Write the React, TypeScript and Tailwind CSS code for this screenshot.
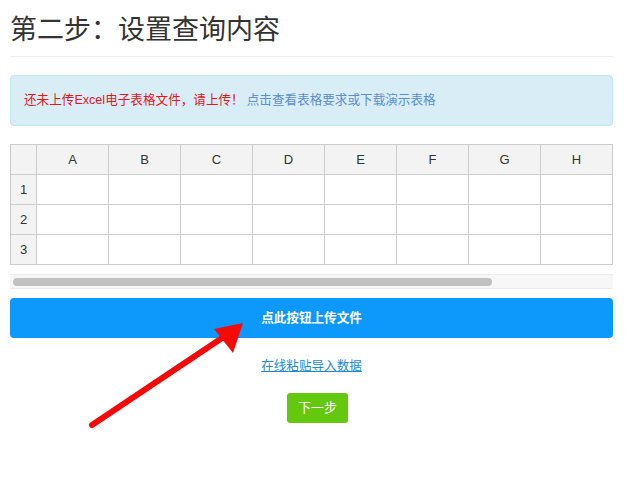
const cols = ['A', 'B', 'C', 'D', 'E', 'F', 'G', 'H'];
const rows = [1, 2, 3];

export default function App() {
  return (
    <div
      className="relative w-[627px] h-[478px] bg-white pl-[10px] pr-[14px] text-[#333]"
      style={{ fontFamily: '"Liberation Sans", "Noto Sans CJK SC", sans-serif' }}
    >
      {/* page heading */}
      <h1 className="pt-[13px] pb-[9px] text-[27px] leading-[34px] text-[#333] border-b border-[#eee]">
        第二步：设置查询内容
      </h1>

      {/* notice */}
      <div className="mt-[18px] h-[51px] flex items-center px-[13px] rounded-[4px] bg-[#d9edf7] border border-[#bce8f1] text-[12.6px]">
        <span className="text-[#e4161b]">还未上传Excel电子表格文件，请上传！</span>
        <a className="ml-[3px] text-[#5a8ed0]">点击查看表格要求或下载演示表格</a>
      </div>

      {/* sheet preview */}
      <div className="mt-[18px] w-[603px] overflow-hidden">
        <table className="border-collapse text-[13px] text-[#333] table-fixed">
          <thead>
            <tr className="h-[30px] bg-[#f3f3f3]">
              <th className="w-[27px] border border-[#ccc] font-normal"></th>
              {cols.map((c) => (
                <th key={c} className="w-[72px] min-w-[72px] border border-[#ccc] font-normal">
                  {c}
                </th>
              ))}
            </tr>
          </thead>
          <tbody>
            {rows.map((r) => (
              <tr key={r} className="h-[30px]">
                <td className="w-[27px] border border-[#ccc] bg-[#f3f3f3] text-center">{r}</td>
                {cols.map((c) => (
                  <td key={c} className="w-[72px] min-w-[72px] border border-[#ccc]"></td>
                ))}
              </tr>
            ))}
          </tbody>
        </table>
      </div>

      {/* horizontal scrollbar */}
      <div className="mt-[9px] h-[15px] bg-[#f7f7f7] border-y border-[#ececec] flex items-center px-[3px]">
        <div className="w-[479px] h-[8px] rounded-full bg-[#c1c1c1]"></div>
      </div>

      <button className="mt-[9px] w-full h-[40px] rounded-[4px] bg-[#0d99fb] text-white text-[12.6px] font-semibold">
        点此按钮上传文件
      </button>

      <div className="mt-[15px] text-center">
        <a className="text-[12.6px] text-[#1c8ae0] underline">在线粘贴导入数据</a>
      </div>

      <div className="mt-[16px] flex justify-center">
        <button className="ml-[12px] w-[61px] h-[30px] rounded-[3px] bg-[#64c80f] text-white text-[13px]">
          下一步
        </button>
      </div>

      {/* annotation arrow */}
      <svg className="absolute left-0 top-0 pointer-events-none" width="627" height="478">
        <line x1="92" y1="425" x2="225" y2="336" stroke="#f50a0a" strokeWidth="6" strokeLinecap="round" />
        <polygon points="243,323 214,329 233,353" fill="#f50a0a" />
      </svg>
    </div>
  );
}
